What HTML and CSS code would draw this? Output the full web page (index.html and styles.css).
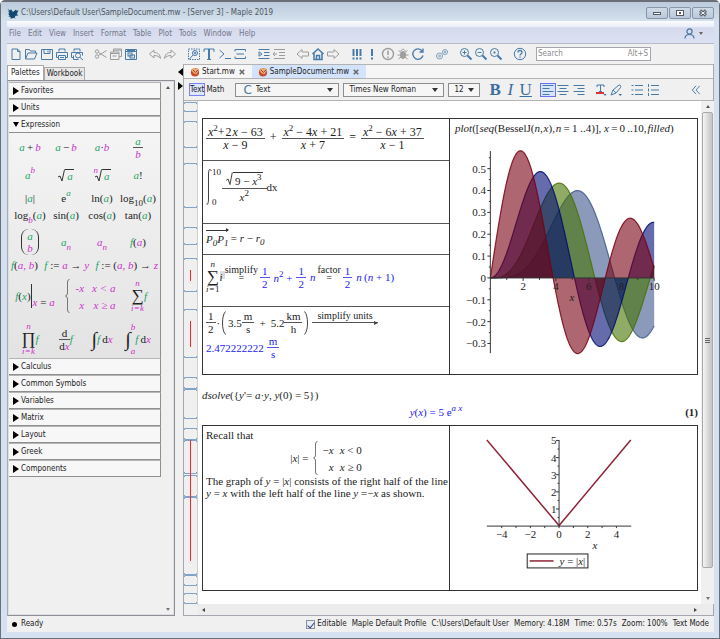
FILE: index.html
```html
<!DOCTYPE html>
<html lang="en">
<head>
<meta charset="utf-8">
<title>SampleDocument.mw - Maple 2019</title>
<link rel="stylesheet" href="styles.css">
</head>
<body>
<div class="window">
  <header class="titlebar">
    <svg class="app-logo" viewBox="0 0 12 11" aria-hidden="true"><path fill="#12486f" d="M.5.5 3 2.500 4 1.200 6 4l3-2.500.5 1.300 2-.6-1 2.200L9.800 6l1.500 1.500-2.800.2-.8 1.600L8.500 10.500 6.500 9.800 5 10.600l-2-.3L4 9 1.500 8.600 2.600 7.200 1 6l1.500-1L1 3.500l1.300-.2z"/></svg>
    <h1 class="title">C:\Users\Default User\SampleDocument.mw - [Server 3] - Maple 2019</h1>
    <div class="window-buttons">
      <button aria-label="Minimize"><svg viewBox="0 0 20 10"><rect x="6.500" y="4.500" width="7" height="2" fill="#fff" stroke="#555c66"/></svg></button>
      <button aria-label="Maximize"><svg viewBox="0 0 20 10"><rect x="6.500" y="2.500" width="7" height="5" fill="#fff" stroke="#555c66"/><rect x="9" y="4" width="2" height="2" fill="#555c66"/></svg></button>
      <button aria-label="Close"><svg viewBox="0 0 20 10"><path d="M7 2.500l6 5M13 2.500l-6 5" stroke="#555c66" stroke-width="3"/><path d="M7.500 3l5 4M12.500 3l-5 4" stroke="#fff"/></svg></button>
    </div>
  </header>
  <nav class="menubar">
    <a href="#">File</a><a href="#">Edit</a><a href="#">View</a><a href="#">Insert</a><a href="#">Format</a><a href="#">Table</a><a href="#">Plot</a><a href="#">Tools</a><a href="#">Window</a><a href="#">Help</a>
    <button class="account" aria-label="Account"><svg viewBox="0 0 20 11"><g fill="none" stroke="#49759f" stroke-width="1.200"><circle cx="5.500" cy="3.400" r="2.600"/><path d="M1 10.500c0-3 2-4 4.500-4s4.500 1 4.500 4"/></g><path d="M15 4h4l-2 3z" fill="#666"/></svg></button>
  </nav>

  <div class="toolbar">
    <div class="group w5">
      <button aria-label="New"><svg viewBox="0 0 14 14"><path d="M3 2h5.500L11 4.500V12.500H3zM8.500 2v2.500H11"/></svg></button>
      <button aria-label="Open"><svg viewBox="0 0 14 14"><path d="M1.500 12V2.500h4l1 1.500h5v2M1.500 12l2.500-6h9l-2.500 6z"/></svg></button>
      <button aria-label="Save"><svg viewBox="0 0 14 14"><path d="M1.500 2.500h11v10h-11zM4 2.500v4h6v-4M8 3.500v2"/></svg></button>
      <button aria-label="Print"><svg viewBox="0 0 14 14"><path d="M4 4.500v-2.500h6v2.500M3.500 10.500h-2v-5h11v5h-2M3.500 8.500h7v4h-7zM5 10.500h4"/></svg></button>
      <button aria-label="Print preview"><svg viewBox="0 0 14 14"><path d="M4 4.500v-2.500h6v2.500M3.500 10.500h-2v-5h11v3M3.500 8.500v4h5"/><circle cx="8" cy="8.500" r="2.500"/><path d="M10 10.500l3 2.500"/></svg></button>
    </div>
    <div class="group w3">
      <button class="off" aria-label="Cut"><svg viewBox="0 0 14 14"><path d="M12.500 3.500L4.500 8.500M12.500 10.500L4.500 5.500"/><circle cx="3" cy="4.500" r="1.700"/><circle cx="3" cy="9.500" r="1.700"/></svg></button>
      <button class="off" aria-label="Copy"><svg viewBox="0 0 14 14"><path d="M4.500 5V2h8v7.500H10M1.500 5h8.500v7.500h-8.500zM1.500 6.500H10M4.500 3.200h8M3.500 9h4"/></svg></button>
      <button aria-label="Paste"><svg viewBox="0 0 14 14"><path d="M1.500 2.500h11v10h-11zM1.500 4.500h11M3 3.500h8"/><rect x="4" y="6" width="4" height="3"/><rect x="6" y="8" width="4.500" height="3"/></svg></button>
    </div>
    <div class="group w2">
      <button class="off" aria-label="Undo"><svg viewBox="0 0 14 14"><path d="M1.500 7L6 3v2.500c4 0 6 2 6.500 6C11 9.500 9 8.500 6 8.500V11z"/></svg></button>
      <button class="off" aria-label="Redo"><svg viewBox="0 0 14 14"><path d="M12.500 7L8 3v2.500c-4 0-6 2-6.500 6C3 9.500 5 8.500 8 8.500V11z"/></svg></button>
    </div>
    <div class="group w4">
      <button aria-label="Insert code region"><svg viewBox="0 0 14 14"><rect x="1.500" y="2" width="11" height="10.500" stroke-dasharray="1.500 1"/><circle cx="8" cy="6" r="2.500"/><circle cx="8" cy="6" r=".8"/><path d="M6 8l-3.500 4"/></svg></button>
      <button aria-label="Insert text"><svg viewBox="0 0 14 14"><path stroke-width="2" d="M7 2v10"/><path d="M2 5V2h10v3M5 12.500h4"/></svg></button>
      <button aria-label="Insert prompt"><svg viewBox="0 0 14 14"><path d="M1.500 3l4.500 4-4.500 4M7 11.500h6"/></svg></button>
      <button aria-label="Insert section"><svg viewBox="0 0 14 14"><path d="M2 4.500v-2h10.500v2M3.500 7h7.500M2 9.500v2h10.500v-2"/></svg></button>
    </div>
    <div class="group w2">
      <button aria-label="Indent"><svg viewBox="0 0 14 14"><path d="M1.500 2.500h11M7 5.500h5.500M7 8.500h5.500M1.500 11.500h11M2 4.800l3 2.200-3 2.200z"/></svg></button>
      <button class="off" aria-label="Outdent"><svg viewBox="0 0 14 14"><path d="M2 2.500h11M7 5.500h6M7 8.500h6M2 11.500h11M1 7h4M3 5l-2 2 2 2"/></svg></button>
    </div>
    <div class="group w3">
      <button class="off" aria-label="Back"><svg viewBox="0 0 14 14"><path d="M1 7l5-4.500v2.500h6.500v4H6v2.500z"/></svg></button>
      <button aria-label="Home"><svg viewBox="0 0 14 14"><path d="M1.500 7L7 2l5.500 5M3 6v6.500h8V6M5.500 12.500v-4h3v4" stroke-width="1.500"/></svg></button>
      <button class="off" aria-label="Forward"><svg viewBox="0 0 14 14"><path d="M13 7L8 2.500v2.500H1.500v4H8v2.500z"/></svg></button>
    </div>
    <div class="group w5">
      <button aria-label="Execute all"><svg viewBox="0 0 14 14"><path stroke-width="2" d="M3.500 2v7M7 2v7M10.500 2v7M3.500 10.500v2M7 10.500v2M10.500 10.500v2"/></svg></button>
      <button aria-label="Execute"><svg viewBox="0 0 14 14"><path stroke-width="2" d="M7 2v7M7 10.500v2"/></svg></button>
      <button class="off" aria-label="Interrupt"><svg viewBox="0 0 14 14"><circle cx="7" cy="7" r="5.500" stroke-width="1.400"/><path d="M7 3.500v4.500M7 9.500v1.500" stroke-width="1.500"/></svg></button>
      <button class="off" aria-label="Debug"><svg viewBox="0 0 14 14"><ellipse cx="7" cy="8" rx="2.500" ry="3.500" fill="#a0a0a0"/><path d="M5 4.500c0-3 4-3 4 0M1.500 8h3M12.500 8h-3M2.500 3.500l2.500 2M11.500 3.500l-2.500 2M2.500 12l2.500-2M11.500 12l-2.500-2"/></svg></button>
      <button aria-label="Restart"><svg viewBox="0 0 14 14"><path d="M12 8.500a5.200 5.200 0 1 1-.8-4.500M12 1.500v3.500H8.500" stroke-width="1.300"/></svg></button>
    </div>
    <div class="group w1">
      <button class="dim" aria-label="Link"><svg viewBox="0 0 14 14"><circle cx="4.500" cy="9" r="3"/><circle cx="4.500" cy="9" r="1"/><circle cx="10" cy="5" r="2.500"/><circle cx="10" cy="5" r=".8"/></svg></button>
    </div>
    <div class="group w3">
      <button aria-label="Zoom in"><svg viewBox="0 0 14 14"><circle cx="5.500" cy="5.500" r="4"/><path d="M5.500 3.500v4M3.500 5.500h4"/><path stroke-width="2" d="M8.500 8.500l4 4"/></svg></button>
      <button aria-label="Zoom out"><svg viewBox="0 0 14 14"><circle cx="5.500" cy="5.500" r="4"/><path d="M3.500 5.500h4"/><path stroke-width="2" d="M8.500 8.500l4 4"/></svg></button>
      <button aria-label="Default zoom"><svg viewBox="0 0 14 14"><circle cx="5.500" cy="5.500" r="4"/><path d="M4.500 5.500h2M5.500 4.500v2" stroke-width="1.500"/><path stroke-width="2" d="M8.500 8.500l4 4"/></svg></button>
    </div>
    <div class="group w1">
      <button aria-label="Help"><svg viewBox="0 0 14 14"><circle cx="7" cy="7" r="5.700"/><path d="M5 5.500c0-2.700 4-2.700 4 0 0 1.500-2 1.500-2 3M7 9.500v1.300" stroke-width="1.300"/></svg></button>
    </div>
    <label class="search"><input type="text" placeholder="Search" aria-label="Search"><span>Alt+S</span></label>
  </div>

  <div class="workspace">
    <aside class="sidebar">
      <div class="side-tabs"><button class="side-tab current">Palettes</button><button class="side-tab">Workbook</button></div>
      <div class="palette-frame">
        <div class="palettes">
          <button class="palette"><i class="tri"></i>Favorites</button>
          <button class="palette"><i class="tri"></i>Units</button>
          <button class="palette"><i class="tri open"></i>Expression</button>
          <div class="expressions">
            <div class="exprs four h28">
              <button><i class="a">a</i>&thinsp;+&thinsp;<i class="b">b</i></button>
              <button><i class="a">a</i>&thinsp;−&thinsp;<i class="b">b</i></button>
              <button><i class="a">a</i>·<i class="b">b</i></button>
              <button><span class="frac"><i class="a">a</i><i class="b">b</i></span></button>
            </div>
            <div class="exprs four h28">
              <button><i class="a">a</i><sup><i class="b">b</i></sup></button>
              <button><span class="root"><svg viewBox="0 0 7 13"><path d="M0 8l2-1 2 5L6.500.5"/></svg><span><i class="a">a</i></span></span></button>
              <button><sup class="index"><i class="b">n</i></sup><span class="root"><svg viewBox="0 0 7 13"><path d="M0 8l2-1 2 5L6.500.5"/></svg><span><i class="a">a</i></span></span></button>
              <button><i class="a">a</i>!</button>
            </div>
            <div class="exprs four h16">
              <button>|<i class="a">a</i>|</button>
              <button>e<sup><i class="a">a</i></sup></button>
              <button>ln(<i class="a">a</i>)</button>
              <button>log<sub>10</sub>(<i class="a">a</i>)</button>
            </div>
            <div class="exprs four h20">
              <button>log<sub><i class="b">b</i></sub>(<i class="a">a</i>)</button>
              <button>sin(<i class="a">a</i>)</button>
              <button>cos(<i class="a">a</i>)</button>
              <button>tan(<i class="a">a</i>)</button>
            </div>
            <div class="exprs four h34">
              <button><span class="binomial"><i class="a">a</i><i class="b">b</i></span></button>
              <button><i class="a">a</i><sub><i class="b">n</i></sub></button>
              <button><i class="b">a</i><sub><i class="b">n</i></sub></button>
              <button><i class="a">f</i>(<i class="b">a</i>)</button>
            </div>
            <div class="exprs spread h14">
              <button><i class="a">f</i>(<i class="b">a, b</i>)</button>
              <button><i class="a">f</i> := <i class="b">a</i> → <i class="b">y</i></button>
              <button><i class="a">f</i> := (<i class="b">a, b</i>) → <i class="b">z</i></button>
            </div>
            <div class="exprs three h48">
              <button class="evaluate"><span><i class="a">f</i>(<i class="a">x</i>)</span><span class="at"><i class="b">x</i> = <i class="b">a</i></span></button>
              <button class="piecewise"><svg class="brace" viewBox="0 0 5 34"><path d="M4.500.5Q2.500.5 2.500 3v11q0 2.500-2 3 2 .5 2 3v11q0 2.500 2 2.500"/></svg><span class="cases b"><i>-x</i><i>x &lt; a</i><i>x</i><i>x ≥ a</i></span></button>
              <button><span class="big-op"><i class="b">n</i><span class="op">∑</span><span class="under b"><i>i</i>&hairsp;=&hairsp;<i>k</i></span></span><i class="a">f</i></button>
            </div>
            <div class="exprs four h36">
              <button><span class="big-op"><i class="b">n</i><span class="op">∏</span><span class="under b"><i>i</i>&hairsp;=&hairsp;<i>k</i></span></span><i class="a">f</i></button>
              <button><span class="frac"><span>d</span><span>d<i class="b">x</i></span></span><i class="a">f</i></button>
              <button><span class="integral">∫</span><i class="a">f</i>&thinsp;d<i class="b">x</i></button>
              <button><span class="integral">∫</span><span class="limits b"><i>b</i><i>a</i></span><i class="a">f</i>&thinsp;d<i class="b">x</i></button>
            </div>
          </div>
          <button class="palette"><i class="tri"></i>Calculus</button>
          <button class="palette"><i class="tri"></i>Common Symbols</button>
          <button class="palette"><i class="tri"></i>Variables</button>
          <button class="palette"><i class="tri"></i>Matrix</button>
          <button class="palette"><i class="tri"></i>Layout</button>
          <button class="palette"><i class="tri"></i>Greek</button>
          <button class="palette"><i class="tri"></i>Components</button>
        </div>
        <div class="side-scroll"><i class="arrow up"></i><i class="arrow down"></i></div>
      </div>
    </aside>
    <div class="splitter"><i class="fold left"></i><i class="fold right"></i></div>

    <main class="editor">
      <div class="doc-tabs">
        <a href="#" class="doc-tab"><svg viewBox="0 0 11 11" class="leaf"><circle cx="5.500" cy="6" r="4.500" fill="#c84b2c"/><path d="M1 3l3-2 2 1 3-1 .5 3L7 8 4 7z" fill="#edae74"/><path d="M3 3l3 3 3-3" stroke="#a33322" fill="none"/></svg>Start.mw<svg viewBox="0 0 8 8" class="close"><path d="M1 1l6 6M7 1L1 7"/></svg></a>
        <a href="#" class="doc-tab current"><svg viewBox="0 0 11 11" class="leaf"><circle cx="5.500" cy="6" r="4.500" fill="#c84b2c"/><path d="M1 3l3-2 2 1 3-1 .5 3L7 8 4 7z" fill="#edae74"/><path d="M3 3l3 3 3-3" stroke="#a33322" fill="none"/></svg>SampleDocument.mw<svg viewBox="0 0 8 8" class="close"><path d="M1 1l6 6M7 1L1 7"/></svg></a>
      </div>
      <div class="format-bar">
        <button class="mode current">Text</button><button class="mode">Math</button>
        <span class="pick style"><b>C</b><select aria-label="Style"><option>Text</option></select></span>
        <span class="pick font"><select aria-label="Font"><option>Times New Roman</option></select></span>
        <span class="pick size"><select aria-label="Size"><option>12</option></select></span>
        <div class="letters"><button class="bold">B</button><button class="italic">I</button><button class="underline">U</button></div>
        <div class="group w3 align">
          <button class="current" aria-label="Align left"><svg viewBox="0 0 14 14"><path d="M1.500 2.500h11M1.500 5.500h7M1.500 8.500h11M1.500 11.500h7"/></svg></button>
          <button aria-label="Align center"><svg viewBox="0 0 14 14"><path d="M1.500 2.500h11M3.500 5.500h7M1.500 8.500h11M3.500 11.500h7"/></svg></button>
          <button aria-label="Align right"><svg viewBox="0 0 14 14"><path d="M1.500 2.500h11M5.500 5.500h7M1.500 8.500h11M5.500 11.500h7"/></svg></button>
        </div>
        <div class="group w2">
          <button aria-label="Text color"><svg viewBox="0 0 14 14"><path d="M4 4V2h7v2M7.500 2v6M6 8.500h3"/><path d="M3 10h8" stroke="#d8333a" stroke-width="2"/><path d="M10.500 11h3l-1.500 2z" fill="#3c6e9e" stroke="none"/></svg></button>
          <button aria-label="Highlight"><svg viewBox="0 0 14 14"><path d="M2 12l2-5 6-5c2 0 2 1.500 1.500 2.500L7 10zM4 7l3 3"/><path d="M9.500 11h3.500l-1.800 2z" fill="#3c6e9e" stroke="none"/></svg></button>
        </div>
        <div class="group w2">
          <button aria-label="Bulleted list"><svg viewBox="0 0 14 14"><path d="M5 2.500h8M5 7h8M5 11.500h8M1.500 2.500h2M1.500 7h2M1.500 11.500h2" /></svg></button>
          <button aria-label="Numbered list"><svg viewBox="0 0 14 14"><path d="M5 2.500h8M5 7h8M5 11.500h8M2.500 1v3M2.500 5.500v3M2.500 10v3"/></svg></button>
        </div>
        <button class="collapse" aria-label="Hide toolbar"><svg viewBox="0 0 12 12"><path d="M6 1L1.500 6 6 11M10.500 1L6 6l4.500 5"/></svg></button>
      </div>

      <div class="pane">
        <svg class="markers" viewBox="0 0 14 504" aria-hidden="true">
          <path class="edge" d="M13.500 0v504"/>
          <g id="brackets"></g>
          <path class="hot" d="M6.500 169v11M6.500 220v26M6.500 339v121"/>
        </svg>
        <article class="document">
          <section class="sheet first">
            <div class="column">
              <div class="cell r1"><div class="math">
                <span class="frac"><span><i>x</i><sup>2</sup>+&hairsp;2&hairsp;<i>x</i> − 63</span><span><i>x</i> − 9</span></span><span class="rel">+</span>
                <span class="frac"><span><i>x</i><sup>2</sup> − 4<i>x</i> + 21</span><span><i>x</i> + 7</span></span><span class="rel">=</span>
                <span class="frac"><span><i>x</i><sup>2</sup> − 6<i>x</i> + 37</span><span><i>x</i> − 1</span></span></div>
              </div>
              <div class="cell r2"><div class="math">
                <svg class="int" viewBox="0 0 6 38"><path d="M5.500 3Q3-1 2.500 5v27Q2 38 .5 36"/></svg><span class="limits"><span>10</span><span>0</span></span>
                <span class="frac"><span class="root"><svg viewBox="0 0 7 14"><path d="M0 9l2-1.500 2 6L6.500.5"/></svg><span>9 − <i>x</i><sup>3</sup></span></span><span><i>x</i><sup>2</sup></span></span><span>dx</span></div>
              </div>
              <div class="cell r3"><div class="math"><span class="vector"><i>P</i><sub><i>0</i></sub><i>P</i><sub><i>1</i></sub></span><span>&thinsp;= <i>r</i> − <i>r</i><sub><i>0</i></sub></span></div></div>
              <div class="cell r4"><div class="math">
                <span class="big-op"><i>n</i><span class="op">∑</span><span class="under"><i>i</i>&hairsp;=&hairsp;1</span></span><i class="marked">i</i>
                <span class="stacked"><span>simplify</span><span>=</span></span>
                <span class="result"><span class="frac"><span>1</span><span>2</span></span><span><i>n</i><sup>2</sup> +</span><span class="frac"><span>1</span><span>2</span></span><i>n</i></span>
                <span class="stacked"><span>factor</span><span>=</span></span>
                <span class="result"><span class="frac"><span>1</span><span>2</span></span><span><i>n</i>&thinsp;(<i>n</i> + 1)</span></span></div>
              </div>
              <div class="cell r5">
                <div class="math units"><span class="frac"><span>1</span><span>2</span></span><span>&hairsp;·</span><svg class="paren" viewBox="0 0 4 24"><path d="M3.500.5Q.5 4 .5 12t3 11.500"/></svg>
                  <span>3.5</span><span class="frac"><span>m</span><span>s</span></span><span class="rel">+</span><span>5.2</span><span class="frac"><span>km</span><span>h</span></span>
                  <svg class="paren" viewBox="0 0 4 24"><path d="M.5.5Q3.500 4 3.500 12t-3 11.500"/></svg><span class="long-arrow">simplify units</span></div>
                <div class="math result"><span>2.472222222</span><span class="frac"><span>m</span><span>s</span></span></div>
              </div>
            </div>
            <div class="plot-cell">
              <p class="command"><i>plot</i>([<i>seq</i>(BesselJ(<i>n,&hairsp;x</i>),&hairsp;<i>n</i>&thinsp;=&thinsp;1 ..4)], <i>x</i>&thinsp;=&thinsp;0&thinsp;..10,&hairsp;<i>filled</i>)</p>
              <svg class="plot" id="bessel" viewBox="0 0 240 220" role="img" aria-label="Bessel functions"><g id="curves"></g><g id="bessel-axes"></g><text class="it" x="115" y="157">x</text></svg>
            </div>
          </section>

          <p class="input"><i>dsolve</i>({<i>y</i>'= <i>a</i>·<i>y</i>, <i>y</i>(0) = 5})</p>
          <div class="output"><span class="blue"><i>y</i>(<i>x</i>) = 5 e<sup><i>a x</i></sup></span><b>(1)</b></div>

          <section class="sheet second">
            <div class="column prose">
              <p>Recall that</p>
              <div class="math definition"><span>|<i>x</i>| =</span><svg class="brace" viewBox="0 0 5 34"><path d="M4.500.5Q2.500.5 2.500 3v11q0 2.500-2 3 2 .5 2 3v11q0 2.500 2 2.500"/></svg><span class="cases"><span>−<i>x</i></span><span><i>x</i> &lt; 0</span><span><i>x</i></span><span><i>x</i> ≥ 0</span></span></div>
              <p>The graph of <i>y</i> = |<i>x</i>| consists of the right half of the line<br><i>y</i> = <i>x</i> with the left half of the line <i>y</i> =−<i>x</i> as shown.</p>
            </div>
            <div class="plot-cell">
              <svg class="plot" viewBox="0 0 240 150" role="img" aria-label="Graph of absolute value"><path d="M32 11l72.500 86L176.500 11" fill="none" stroke="#8f2436" stroke-width="1.500"/><g id="abs-axes"></g><text class="it" x="138" y="120">x</text>
                <rect x="72.500" y="125.500" width="61" height="14" fill="#fff" stroke="#222"/><path d="M75 132.500h24" stroke="#8f2436" stroke-width="1.500"/><text x="105" y="137"><tspan class="it">y</tspan> = |<tspan class="it">x</tspan>|</text></svg>
            </div>
          </section>
        </article>
        <div class="v-scroll"><i class="arrow up"></i><div class="thumb"><i></i></div><i class="arrow down"></i></div>
        <div class="h-scroll"><i class="arrow west"></i><i class="arrow east"></i></div>
      </div>
    </main>
  </div>

  <footer class="status">
    <span class="ready"><i></i>Ready</span>
    <label><input type="checkbox" checked>Editable</label>
    <span>Maple Default Profile</span><span>C:\Users\Default User</span><span>Memory: 4.18M</span><span>Time: 0.57s</span><span>Zoom: 100%</span><span>Text Mode</span>
  </footer>
</div>
<script src="plots.js"></script>
</body>
</html>
```

FILE: styles.css
```css
* { box-sizing: border-box; }
body { margin: 0; font: 8px/12px "DejaVu Sans Condensed", "DejaVu Sans", sans-serif; color: #222; }
button, input, select { font: inherit; color: inherit; margin: 0; padding: 0; border: 0; background: none; }
p, h1 { margin: 0; font-weight: normal; }
a { color: inherit; text-decoration: none; }
svg { display: block; overflow: visible; }

.window { display: flex; flex-direction: column; min-height: 100vh; padding: 0 5px 6px 6px; background: #d5e1f0; border: 1px solid #6b7078; border-top-width: 2px; border-radius: 5px 5px 0 0; }
.titlebar { display: flex; align-items: center; height: 19px; margin: 0 -5px 0 -6px; padding: 3px 5px 0 6px; background: linear-gradient(#bccbdc, #d4e1ec); }
.app-logo { width: 12px; height: 11px; margin-right: 2px; }
.title { flex: 1; font-size: 8px; color: #4d5661; }
.window-buttons { display: flex; gap: 1px; }
.window-buttons button { width: 22px; height: 12px; border: 1px solid #8695a8; border-radius: 2px; background: linear-gradient(#cfdae7, #b9c8d9); }
.window-buttons svg { width: 20px; height: 10px; }
.menubar { display: flex; align-items: center; gap: 7px; height: 23px; padding: 3px 10px 0 2px; color: #74788a; background: linear-gradient(#fbfcfe, #e9edf8 28%, #d4d9ec 30%, #dce1f2); border-bottom: 1px solid #b7bccb; }
.account { margin-left: auto; }
.account svg { width: 20px; height: 11px; }

.toolbar { display: flex; align-items: center; gap: 8px; height: 20px; padding: 0 1px; background: #f0f0f0; }
.group { display: flex; flex: none; }
.group button { flex: 1; min-width: 0; display: flex; justify-content: center; }
.group svg { width: 14px; height: 14px; flex: none; fill: none; stroke: #467aa9; }
.group .off svg { stroke: #9c9c9c; }
.group .dim svg { stroke: #7fa0bd; }
.w1 { width: 16px; } .w2 { width: 31px; } .w3 { width: 46px; } .w4 { width: 62px; } .w5 { width: 77px; }
.search { display: flex; align-items: center; width: 115px; height: 14px; padding: 0 2px 0 1px; background: #fff; border: 1px solid #a3a7ad; color: #8a8a8a; }
.search input { flex: 1; min-width: 0; height: 12px; }
.search input::placeholder { color: #8a8a8a; }

.workspace { flex: 1; display: flex; background: #f0f0f0; }
.sidebar { width: 168px; flex: none; display: flex; flex-direction: column; }
.side-tabs { display: flex; align-items: flex-end; height: 16px; }
.side-tab { height: 13px; padding: 0 2px; border: 1px solid #a9a9a9; border-bottom: 0; background: #e9e9e9; }
.side-tab.current { height: 15px; padding: 0 3px; background: #fff; }
.palette-frame { flex: 1; display: flex; padding: 1px 0 0 0; border: 1px solid #8d8f94; border-left-color: #a7abb3; outline: 1px solid #dcdfe4; outline-offset: -2px; }
.palettes { flex: 1; }
.palette { display: flex; align-items: center; width: 100%; height: 17px; padding-left: 4px; background: #f7f7f7; border: 1px solid #8f8f8f; border-top-color: #b5b5b5; }
.tri { width: 0; margin-right: 2px; border: 4px solid transparent; border-left: 6px solid #000; border-right: 0; }
.tri.open { border: 3px solid transparent; border-top: 5px solid #000; border-bottom: 0; }
.side-scroll, .v-scroll { display: flex; flex-direction: column; align-items: center; justify-content: space-between; width: 13px; background: #f0f0f0; padding: 4px 0; }
.arrow { border: 2px solid transparent; }
.up { border-bottom: 3px solid #555; border-top: 0; }
.down { border-top: 3px solid #777; border-bottom: 0; }
.west { border-right: 3px solid #444; border-left: 0; }
.east { border-left: 3px solid #444; border-right: 0; }

.expressions { border: solid #8f8f8f; border-width: 0 1px; background: linear-gradient(#f4f4f4, #e3e3e3); font: 11px/12px "Liberation Serif", serif; color: #222; }
.exprs { display: grid; align-items: center; }
.exprs button { display: flex; align-items: center; justify-content: center; white-space: pre; }
.four { grid-template-columns: repeat(4, 36px); padding: 0 3px; }
.three { grid-template-columns: 52px 58px 40px; }
.spread { display: flex; justify-content: space-between; padding: 0 2px; }
.h14 { height: 14px; } .h16 { height: 16px; } .h20 { height: 20px; } .h28 { height: 28px; } .h34 { height: 33px; } .h36 { height: 38px; } .h48 { height: 48px; }
.a { color: #23a566; }
.b { color: #cc33cc; }
sup, sub { font-size: 9px; line-height: 8px; vertical-align: baseline; }
.exprs sup { align-self: flex-start; }
.exprs sub { align-self: flex-end; }
.exprs button:has(> sup), .exprs button:has(> sub) { height: 18px; }
.exprs .index { margin-right: -3px; }

.frac { display: inline-flex; flex-direction: column; align-items: center; }
.frac > :first-child { align-self: stretch; text-align: center; padding: 0 2px; border-bottom: 1px solid #555; }
.root { display: inline-flex; }
.root svg { width: 7px; height: 13px; fill: none; stroke: #333; }
.root > span { border-top: 1px solid #333; padding: 0 1px 0 2px; }
.binomial { display: flex; flex-direction: column; align-items: center; padding: 1px 5px; border: solid #333; border-width: 0 1px; border-radius: 8px; }
.evaluate { align-items: flex-start; }
.evaluate .at { border-left: 1px solid #333; padding: 12px 0 0 1px; }
.brace { width: 5px; height: 34px; fill: none; stroke: #777; }
.cases { display: grid; grid-template-columns: auto auto; gap: 5px 8px; justify-items: end; margin-left: 6px; }
.big-op { display: inline-flex; flex-direction: column; align-items: center; }
.big-op > i { font-size: 9px; line-height: 8px; }
.op { font-size: 17px; line-height: 17px; }
.under { font-size: 9px; line-height: 9px; white-space: nowrap; }
.integral { font-size: 20px; line-height: 24px; }
.limits { display: flex; flex-direction: column; justify-content: space-between; align-self: stretch; font-size: 9px; line-height: 8px; }
.exprs .limits { height: 32px; }

.splitter { display: flex; flex-direction: column; align-items: flex-end; gap: 6px; width: 8px; padding-top: 4px; }
.fold { border: 4px solid transparent; }
.fold.left { border-right: 5px solid #000; border-left: 0; }
.fold.right { border-left: 5px solid #000; border-right: 0; }

.editor { flex: 1; min-width: 0; display: flex; flex-direction: column; border: 1px solid #a5a9af; border-top: 0; }
.doc-tabs { display: flex; height: 15px; background: #f6f6f6; border: solid #b3b3b3; border-width: 1px 0; }
.doc-tab { display: flex; align-items: center; padding: 0 7px 0 6px; }
.doc-tab.current { background: #d2e3fb; }
.leaf { width: 10px; height: 10px; margin-right: 2px; }
.close { width: 6px; height: 6px; margin-left: 4px; fill: none; stroke: #666; stroke-width: 2; }
.format-bar { display: flex; align-items: center; height: 22px; padding: 0 12px 0 5px; background: #f0f0f0; border-bottom: 1px solid #b3b3b3; }
.mode { height: 13px; padding: 0 1px; }
.mode.current { background: #dce6fc; border: 1px solid #7c80f0; padding: 0; }
.pick { display: flex; align-items: center; height: 14px; padding: 0 5px; background: #f6f6f6; border: 1px solid #8d8d8d; flex: none; }
.pick::after { content: ""; border: 3px solid transparent; border-top: 4px solid #333; border-bottom: 0; }
.pick select { appearance: none; flex: 1; min-width: 0; }
.pick b { font: 12px/12px "DejaVu Sans", sans-serif; color: #49759f; margin: 0 4px 0 2px; }
.style { width: 104px; margin-left: 10px; }
.font { width: 101px; margin-left: 4px; }
.size { width: 32px; margin: 0 7px 0 4px; }
.letters { display: flex; width: 46px; margin-right: 7px; font: 17px/18px "Liberation Serif", serif; color: #3c6e9e; }
.letters button { flex: 1; }
.letters .bold { font-weight: bold; } .italic { font-style: italic; } .underline { text-decoration: underline; }
.format-bar .group { margin-right: 6px; }
.align .current { background: #d7e5fd; outline: 1px solid #6c70ee; outline-offset: -1px; }
.collapse { margin-left: auto; }
.collapse svg { width: 10px; height: 12px; fill: none; stroke: #3c6e9e; }

.pane { flex: 1; display: grid; grid-template: 1fr 11px / 14px 1fr 12px; background: #f0f0f0; }
.markers { width: 14px; height: 504px; grid-row: span 2; fill: none; stroke: #7fa3c8; stroke-width: 1; }
.markers .hot { stroke: #f22; }
.markers .edge { stroke: #cfcfcf; }
.document { min-width: 0; background: #fff; padding: 17px 3px 12px 4px; font: 11px/12px "Liberation Serif", serif; color: #222; white-space: nowrap; }
.v-scroll .thumb { flex: 1; width: 11px; margin: 4px 0 29px; display: flex; align-items: center; justify-content: center; background: linear-gradient(90deg, #f5f5f5, #d6d6d6 60%, #c4c4c4); border: 1px solid #a9a9a9; border-radius: 2px; }
.thumb i { width: 5px; height: 5px; border: solid #666; border-width: 1px 0; background: linear-gradient(transparent 33%, #666 33% 66%, transparent 66%); }
.h-scroll { grid-column: 2 / span 2; display: flex; justify-content: space-between; align-items: center; padding: 0 16px 0 4px; background: #ececec; }

.sheet { display: grid; grid-template-columns: 1fr 1fr; border: 1px solid #333; }
.column { min-width: 0; border-right: 1px solid #333; }
.cell { padding: 3px 3px 0; border-bottom: 1px solid #555; }
.cell:last-child { border-bottom: 0; }
.r1 { height: 42px; font-size: 12px; } .r2 { height: 63px; } .r3 { height: 31px; } .r4 { height: 52px; } .r5 { height: 67px; }
.math { display: flex; align-items: center; }
.math sup { vertical-align: 5px; }
.math sub { vertical-align: -3px; }
.r1 .frac > :first-child { padding: 2px 2px 0; }
.rel { margin: 0 5px; }
.r2 { padding-top: 7px; }
.int { width: 6px; height: 38px; fill: none; stroke: #444; }
.r2 .limits { margin-right: 1px; }
.r2 .frac > .root { padding: 0 4px 1px; }
.r3 { padding-top: 6px; }
.vector { background: linear-gradient(#333, #333) top / 100% 1px no-repeat; position: relative; padding-top: 3px; }
.vector::after { content: ""; position: absolute; right: -1px; top: -2px; border: 2px solid transparent; border-left: 3px solid #333; border-right: 0; }
.r4 { padding-top: 5px; }
.marked { background: linear-gradient(#ddd, #ddd) top / 100% 8px no-repeat; padding-right: 2px; }
.stacked { display: flex; flex-direction: column; align-items: center; font-size: 10px; line-height: 8px; padding-bottom: 6px; }
.result { display: flex; align-items: center; gap: 3px; color: #22e; }
.result .frac > :first-child { border-color: #55e; }
.r4 .result { margin: 0 2px; gap: 4px; }
.paren { width: 4px; height: 24px; margin: 0 2px; fill: none; stroke: #444; }
.long-arrow { position: relative; margin-left: 2px; padding: 0 5px 2px; margin-bottom: 11px; border-bottom: 1px solid #555; font-size: 10px; line-height: 9px; }
.long-arrow::after { content: ""; position: absolute; right: 0; bottom: -3px; border: 2px solid transparent; border-left: 4px solid #444; border-right: 0; }

.plot-cell { padding: 3px 3px 0 5px; min-width: 0; }
.plot { width: 100%; height: auto; font: 11px "Liberation Serif", serif; fill: #222; }
.first .plot { margin-top: 11px; }
.it { font-style: italic; }
.axis { stroke: #333; fill: none; }
.input { margin-top: 14px; }
.output { display: flex; align-items: end; padding: 3px 0; margin-bottom: 4px; }
.output b { width: 28px; text-align: right; }
.output sup { vertical-align: 5px; }
.blue { flex: 1; text-align: center; color: #22e; }
.second { min-height: 166px; }
.prose { padding: 3px 3px; }
.definition { justify-content: center; gap: 4px; }
.definition .cases { margin-left: 1px; gap: 5px 6px; }

.status { display: flex; align-items: center; gap: 5px; height: 16px; padding: 0 5px; background: #f0f0f0; white-space: nowrap; }
.ready { display: flex; align-items: center; margin-right: auto; }
.ready i { width: 5px; height: 5px; margin-right: 4px; border-radius: 50%; background: #000; }
.status label { display: flex; align-items: center; gap: 2px; }
.status input { appearance: none; display: grid; place-items: center; width: 9px; height: 9px; background: #e8ecf4; border: 1px solid #8a8f98; }
.status input:checked::before { content: ""; width: 3px; height: 6px; border: solid #2c3f80; border-width: 0 1px 1px 0; transform: rotate(40deg); }
```

FILE: plots.js
```js
// Bessel function of the first kind, by its integral form.
function besselJ(n, x) {
  const steps = 120;
  let sum = 0;
  for (let k = 0; k < steps; k++) {
    const t = Math.PI * (k + 0.5) / steps;
    sum += Math.cos(n * t - x * Math.sin(t));
  }
  return sum / steps;
}

const ox = 35.5, oy = 133.5, sx = 16.45, sy = 219.5;
const colors = [[4, '#3e578c'], [3, '#467300'], [2, '#000a73'], [1, '#780010']];
let curves = '';
for (const [n, color] of colors) {
  let line = '';
  for (let k = 0; k <= 200; k++) {
    const x = k / 20;
    line += (k ? 'L' : 'M') + (ox + x * sx).toFixed(2) + ' ' + (oy - besselJ(n, x) * sy).toFixed(2);
  }
  curves += `<path d="${line}V${oy}H${ox}Z" fill="${color}" fill-opacity=".6"/><path d="${line}" fill="none" stroke="${color}" stroke-opacity=".85" stroke-width="1.2"/>`;
}
document.getElementById('curves').innerHTML = curves;

let axes = `<path class="axis" d="M${ox} 6V209M${ox} ${oy}H200`;
for (let k = -6; k <= 11; k++) axes += `M${ox} ${oy - k * sy / 20}h${k % 2 ? -1.5 : -3}`;
for (let k = 1; k <= 10; k++) axes += `M${ox + k * sx} ${oy}v${k % 2 ? 2 : 3}`;
axes += '"/>';
for (let k = -3; k <= 5; k++) {
  axes += `<text text-anchor="end" x="31" y="${oy - k * sy / 10 + 4}">${k ? String(k / 10).replace('-', '−') : 0}</text>`;
}
for (let k = 2; k <= 10; k += 2) axes += `<text text-anchor="middle" x="${ox + k * sx}" y="146">${k}</text>`;
document.getElementById('bessel-axes').innerHTML = axes;

const cx = 104.5, cy = 97.5;
let abs = `<path class="axis" d="M${cx} 11V${cy}M32 ${cy}H177`;
for (let k = 1; k <= 10; k++) abs += `M${cx} ${cy - k * 8.6}h${k % 2 ? -1.5 : -3}`;
for (let k = -4; k <= 4; k++) abs += `M${cx + k * 14.4} ${cy}v2`;
abs += '"/>';
for (let k = 1; k <= 5; k++) abs += `<text text-anchor="end" x="102" y="${cy - k * 17.2 + 4}">${k}</text>`;
for (let k = -4; k <= 4; k += 2) abs += `<text text-anchor="middle" x="${cx + k * 14.4}" y="109">${String(k).replace('-', '−')}</text>`;
document.getElementById('abs-axes').innerHTML = abs;

// Group brackets beside the document, as [start, end] pairs.
const spans = [[1, 10], [20, 46], [62, 106], [126, 143], [157, 190], [208, 256], [276, 287], [288, 317], [327, 338], [339, 372], [374, 395], [396, 473], [474, 484], [492, 502]];
document.getElementById('brackets').innerHTML = spans
  .map(([a, b]) => `<path d="M.5 ${a + 2}v-1.500h12v1.500M.5 ${b - 1}v1.500h12v-1.500"/>`).join('');
```
